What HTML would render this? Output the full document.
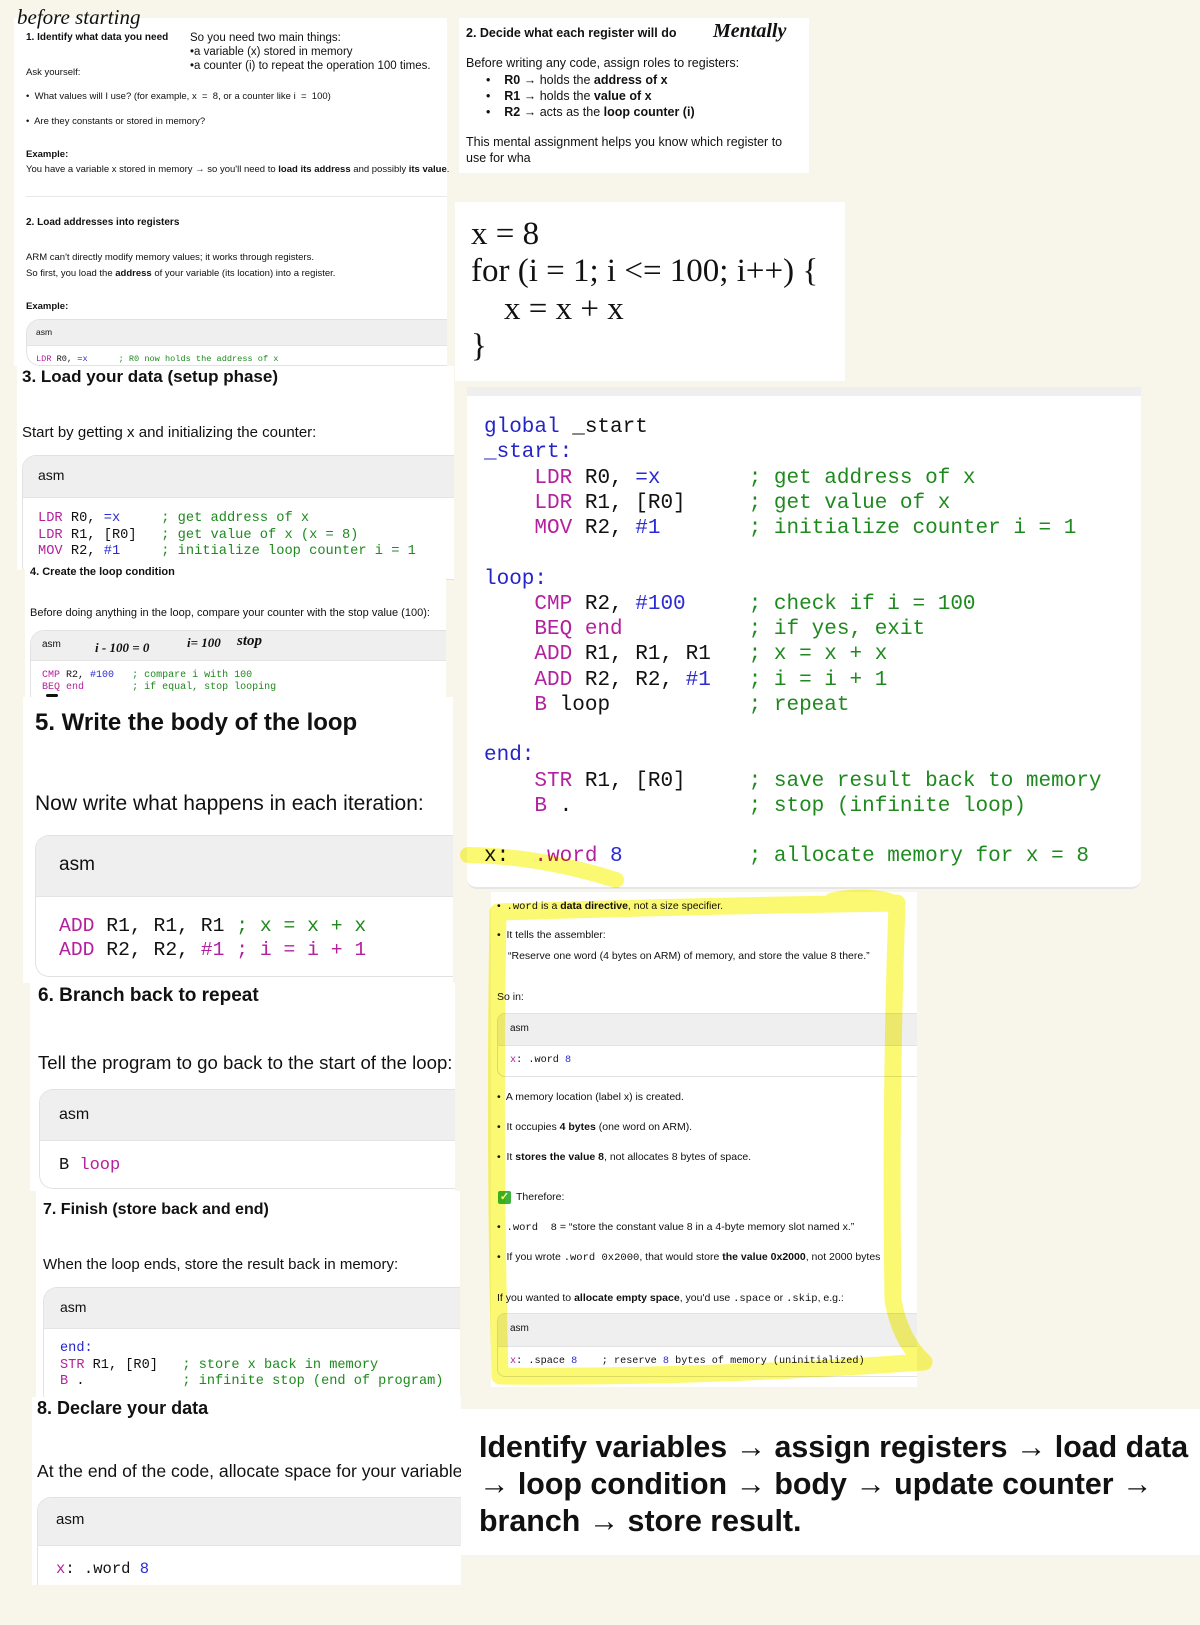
<!DOCTYPE html>
<html><head><meta charset="utf-8"><style>
*{margin:0;padding:0;box-sizing:border-box}
body{width:1200px;height:1624px;background:#f8f6ea;position:relative;overflow:hidden;font-family:"Liberation Sans",Arial,sans-serif;color:#111}
.p{position:absolute;background:#fff;overflow:hidden}
.t{position:absolute;white-space:pre;line-height:1.2}
.b{font-weight:bold}
.m{font-family:"Liberation Mono",monospace;white-space:pre;position:absolute;line-height:1.2}
.box{position:absolute;border:1px solid #e2e2e2;border-right:none;border-radius:14px 0 0 14px;background:#fff;overflow:hidden}
.hd{background:#efefef;border-bottom:1px solid #e4e4e4}
.k{color:#b4219f}.n{color:#2b2bd6}.c{color:#1e8a1e}.l{color:#2424c8}
</style></head><body>

<!-- Panel A -->
<div class="p" style="left:14px;top:18px;width:433px;height:348px"></div>
<div class="t" style="left:17px;top:5px;font:italic 21px 'Liberation Serif',serif;color:#111">before starting</div>
<div class="t b" style="left:26px;top:32px;font-size:10px">1. Identify what data you need</div>
<div class="t" style="left:190px;top:31px;font-size:11.5px;line-height:14px">So you need two main things:
•a variable (x) stored in memory
•a counter (i) to repeat the operation 100 times.</div>
<div class="t" style="left:26px;top:67px;font-size:9.5px">Ask yourself:</div>
<div class="t" style="left:26px;top:91px;font-size:9.5px">•  What values will I use? (for example, x  =  8, or a counter like i  =  100)</div>
<div class="t" style="left:26px;top:116px;font-size:9.5px">•  Are they constants or stored in memory?</div>
<div class="t b" style="left:26px;top:149px;font-size:9.5px">Example:</div>
<div class="t" style="left:26px;top:164px;font-size:9.5px">You have a variable x stored in memory → so you'll need to <b>load its address</b> and possibly <b>its value</b>.</div>
<div style="position:absolute;left:26px;top:196px;width:421px;height:1px;background:#e8e8e8"></div>
<div class="t b" style="left:26px;top:217px;font-size:10px">2. Load addresses into registers</div>
<div class="t" style="left:26px;top:252px;font-size:9.5px">ARM can't directly modify memory values; it works through registers.</div>
<div class="t" style="left:26px;top:268px;font-size:9.5px">So first, you load the <b>address</b> of your variable (its location) into a register.</div>
<div class="t b" style="left:26px;top:301px;font-size:9.5px">Example:</div>
<div class="box" style="left:26px;top:319px;width:421px;height:47px"><div class="hd" style="height:26px"></div></div>
<div class="t" style="left:36px;top:327px;font-size:8.5px">asm</div>
<div class="m" style="left:36px;top:354px;font-size:8.6px"><span class="k">LDR</span> R0, <span class="n">=x</span>      <span class="c">; R0 now holds the address of x</span></div>

<!-- Panel B -->
<div class="p" style="left:17px;top:366px;width:437px;height:204px"></div>
<div class="t b" style="left:22px;top:367px;font-size:17px">3. Load your data (setup phase)</div>
<div class="t" style="left:22px;top:424px;font-size:15px">Start by getting x and initializing the counter:</div>
<div class="box" style="left:22px;top:455px;width:432px;height:125px"><div class="hd" style="height:42px"></div></div>
<div class="t" style="left:38px;top:467px;font-size:14px">asm</div>
<div class="m" style="left:38px;top:511px;font-size:13.7px;line-height:16.5px"><span class="k">LDR</span> R0, <span class="n">=x</span>     <span class="c">; get address of x</span>
<span class="k">LDR</span> R1, [R0]   <span class="c">; get value of x (x = 8)</span>
<span class="k">MOV</span> R2, <span class="n">#1</span>     <span class="c">; initialize loop counter i = 1</span></div>
<div style="position:absolute;left:17px;top:570px;width:8px;height:20px;background:#f8f6ea"></div>

<!-- Panel C -->
<div class="p" style="left:25px;top:570px;width:421px;height:128px"></div>
<div class="t b" style="left:30px;top:566px;font-size:11px">4. Create the loop condition</div>
<div class="t" style="left:30px;top:607px;font-size:11px">Before doing anything in the loop, compare your counter with the stop value (100):</div>
<div class="box" style="left:30px;top:630px;width:416px;height:80px"><div class="hd" style="height:30px"></div></div>
<div class="t" style="left:42px;top:639px;font-size:10px">asm</div>
<div class="t" style="left:95px;top:640px;font:italic bold 13px 'Liberation Serif',serif">i - 100 = 0</div>
<div class="t" style="left:187px;top:635px;font:italic bold 13px 'Liberation Serif',serif">i= 100</div>
<div class="t" style="left:237px;top:633px;font:italic bold 15px 'Liberation Serif',serif">stop</div>
<div class="m" style="left:42px;top:670px;font-size:10px;line-height:12px"><span class="k">CMP</span> R2, <span class="n">#100</span>   <span class="c">; compare i with 100</span>
<span class="k">BEQ</span> <span class="k">end</span>        <span class="c">; if equal, stop looping</span></div>

<!-- Panel D -->
<div class="p" style="left:23px;top:697px;width:430px;height:286px"></div>
<div style="position:absolute;left:46px;top:694px;width:12px;height:3px;background:#111;border-radius:2px"></div>
<div class="t b" style="left:35px;top:709px;font-size:24px">5. Write the body of the loop</div>
<div class="t" style="left:35px;top:791px;font-size:21px">Now write what happens in each iteration:</div>
<div class="box" style="left:35px;top:835px;width:418px;height:142px"><div class="hd" style="height:61px"></div></div>
<div class="t" style="left:59px;top:854px;font-size:19px">asm</div>
<div class="m" style="left:59px;top:915px;font-size:19.7px;line-height:23.5px"><span class="k">ADD</span> R1, R1, R1 <span class="c">; x = x + x</span>
<span class="k">ADD</span> R2, R2, <span class="k">#1 ; i = i + 1</span></div>

<!-- Panel E -->
<div class="p" style="left:30px;top:983px;width:425px;height:208px"></div>
<div class="t b" style="left:38px;top:985px;font-size:19px">6. Branch back to repeat</div>
<div class="t" style="left:38px;top:1052px;font-size:18.6px">Tell the program to go back to the start of the loop:</div>
<div class="box" style="left:39px;top:1089px;width:416px;height:100px"><div class="hd" style="height:51px"></div></div>
<div class="t" style="left:59px;top:1105px;font-size:16px">asm</div>
<div class="m" style="left:59px;top:1156px;font-size:17px">B <span class="k">loop</span></div>

<!-- Panel F -->
<div class="p" style="left:36px;top:1191px;width:424px;height:206px"></div>
<div class="t b" style="left:43px;top:1200px;font-size:16px">7. Finish (store back and end)</div>
<div class="t" style="left:43px;top:1256px;font-size:15px">When the loop ends, store the result back in memory:</div>
<div class="box" style="left:43px;top:1287px;width:417px;height:120px"><div class="hd" style="height:41px"></div></div>
<div class="t" style="left:60px;top:1299px;font-size:14px">asm</div>
<div class="m" style="left:60px;top:1341px;font-size:13.6px;line-height:16.5px"><span class="l">end:</span>
<span class="k">STR</span> R1, [R0]   <span class="c">; store x back in memory</span>
<span class="k">B</span> .            <span class="c">; infinite stop (end of program)</span></div>

<!-- Panel G -->
<div class="p" style="left:32px;top:1397px;width:429px;height:188px"></div>
<div class="t b" style="left:37px;top:1398px;font-size:18px">8. Declare your data</div>
<div class="t" style="left:37px;top:1461px;font-size:17.6px">At the end of the code, allocate space for your variable:</div>
<div class="box" style="left:37px;top:1497px;width:424px;height:110px"><div class="hd" style="height:48px"></div></div>
<div class="t" style="left:56px;top:1511px;font-size:15px">asm</div>
<div class="m" style="left:56px;top:1560px;font-size:15.5px"><span class="k">x</span>: .word <span class="n">8</span></div>
<div style="position:absolute;left:0;top:1585px;width:470px;height:40px;background:#f8f6ea"></div>

<!-- Panel H -->
<div class="p" style="left:459px;top:18px;width:350px;height:155px"></div>
<div class="t b" style="left:466px;top:26px;font-size:12.5px">2. Decide what each register will do</div>
<div class="t" style="left:713px;top:20px;font:italic bold 20px 'Liberation Serif',serif">Mentally</div>
<div class="t" style="left:466px;top:56px;font-size:12.5px">Before writing any code, assign roles to registers:</div>
<div class="t" style="left:486px;top:72px;font-size:12.5px;line-height:16px">•    <b>R0</b> → holds the <b>address of x</b>
•    <b>R1</b> → holds the <b>value of x</b>
•    <b>R2</b> → acts as the <b>loop counter (i)</b></div>
<div class="t" style="left:466px;top:134px;font-size:12.5px;line-height:16px">This mental assignment helps you know which register to
use for wha</div>

<!-- Panel I formula -->
<div class="p" style="left:455px;top:202px;width:390px;height:179px"></div>
<div class="t" style="left:471px;top:216px;font:33px 'Liberation Serif',serif;line-height:37.3px">x = 8
for (i = 1; i &lt;= 100; i++) {
    x = x + x
}</div>

<!-- Panel J big code -->
<div class="p" style="left:467px;top:387px;width:674px;height:502px;border-bottom:2px solid #e6e6e6;border-radius:0 0 10px 10px"></div>
<div style="position:absolute;left:467px;top:387px;width:674px;height:9px;background:#efefef"></div>
<div class="m" style="left:484px;top:415px;font-size:21px;line-height:25.25px"><span class="l">global</span> _start
<span class="l">_start:</span>
    <span class="k">LDR</span> R0, <span class="n">=x</span>       <span class="c">; get address of x</span>
    <span class="k">LDR</span> R1, [R0]     <span class="c">; get value of x</span>
    <span class="k">MOV</span> R2, <span class="n">#1</span>       <span class="c">; initialize counter i = 1</span>

<span class="l">loop:</span>
    <span class="k">CMP</span> R2, <span class="n">#100</span>     <span class="c">; check if i = 100</span>
    <span class="k">BEQ end</span>          <span class="c">; if yes, exit</span>
    <span class="k">ADD</span> R1, R1, R1   <span class="c">; x = x + x</span>
    <span class="k">ADD</span> R2, R2, <span class="n">#1</span>   <span class="c">; i = i + 1</span>
    <span class="k">B</span> loop           <span class="c">; repeat</span>

<span class="l">end:</span>
    <span class="k">STR</span> R1, [R0]     <span class="c">; save result back to memory</span>
    <span class="k">B</span> .              <span class="c">; stop (infinite loop)</span>

x:  <span class="k">.word</span> <span class="n">8</span>          <span class="c">; allocate memory for x = 8</span></div>

<!-- Panel L -->
<div class="p" style="left:491px;top:892px;width:426px;height:495px"></div>
<div class="t" style="left:497px;top:900px;font-size:10.5px">•  <span style="font-family:'Liberation Mono',monospace">.word</span> is a <b>data directive</b>, not a size specifier.</div>
<div class="t" style="left:497px;top:929px;font-size:10.5px">•  It tells the assembler:</div>
<div class="t" style="left:508px;top:950px;font-size:10.5px">“Reserve one word (4 bytes on ARM) of memory, and store the value 8 there.”</div>
<div class="t" style="left:497px;top:991px;font-size:10.5px">So in:</div>
<div class="box" style="left:497px;top:1013px;width:420px;height:64px;border-radius:8px 0 0 8px"><div class="hd" style="height:32px"></div></div>
<div class="t" style="left:510px;top:1023px;font-size:10px">asm</div>
<div class="m" style="left:510px;top:1055px;font-size:10.2px"><span class="k">x</span>: .word <span class="n">8</span></div>
<div class="t" style="left:497px;top:1091px;font-size:10.5px">•  A memory location (label x) is created.</div>
<div class="t" style="left:497px;top:1121px;font-size:10.5px">•  It occupies <b>4 bytes</b> (one word on ARM).</div>
<div class="t" style="left:497px;top:1151px;font-size:10.5px">•  It <b>stores the value 8</b>, not allocates 8 bytes of space.</div>
<div style="position:absolute;left:498px;top:1191px;width:13px;height:13px;background:#3cb43c;border-radius:2px;color:#fff;font-size:11px;line-height:13px;text-align:center;font-weight:bold">✓</div>
<div class="t" style="left:516px;top:1191px;font-size:10.5px">Therefore:</div>
<div class="t" style="left:497px;top:1221px;font-size:10.5px">•  <span style="font-family:'Liberation Mono',monospace">.word  8</span> = “store the constant value 8 in a 4-byte memory slot named x.”</div>
<div class="t" style="left:497px;top:1251px;font-size:10.5px">•  If you wrote <span style="font-family:'Liberation Mono',monospace">.word 0x2000</span>, that would store <b>the value 0x2000</b>, not 2000 bytes</div>
<div class="t" style="left:497px;top:1292px;font-size:10.5px">If you wanted to <b>allocate empty space</b>, you'd use <span style="font-family:'Liberation Mono',monospace">.space</span> or <span style="font-family:'Liberation Mono',monospace">.skip</span>, e.g.:</div>
<div class="box" style="left:497px;top:1313px;width:420px;height:64px;border-radius:8px 0 0 8px"><div class="hd" style="height:33px"></div></div>
<div class="t" style="left:510px;top:1323px;font-size:10px">asm</div>
<div class="m" style="left:510px;top:1356px;font-size:10.2px"><span class="k">x</span>: .space <span class="n">8</span>    ; reserve <span class="n">8</span> bytes of memory (uninitialized)</div>

<!-- Panel K summary -->
<div class="p" style="left:461px;top:1409px;width:739px;height:146px"></div>
<div class="t b" style="left:479px;top:1428px;font-size:31px;line-height:37px;transform:scaleX(0.98);transform-origin:left top">Identify variables → assign registers → load data
→ loop condition → body → update counter →
branch → store result.</div>

<!-- Highlights -->
<svg width="1200" height="1624" style="position:absolute;left:0;top:0;mix-blend-mode:multiply;pointer-events:none">
<g fill="none" stroke="#fbf86a" stroke-linecap="round" stroke-linejoin="round" opacity="0.95">
<path d="M498,912 Q700,906 897,903 Q890,1100 893,1300 Q900,1340 924,1362 Q700,1378 500,1376 Q494,1150 498,912" stroke-width="17"/>
<path d="M468,855 Q540,856 616,880" stroke-width="16"/>
<path d="M830,897 Q860,890 890,897" stroke-width="8"/>
</g>
</svg>
</body></html>
